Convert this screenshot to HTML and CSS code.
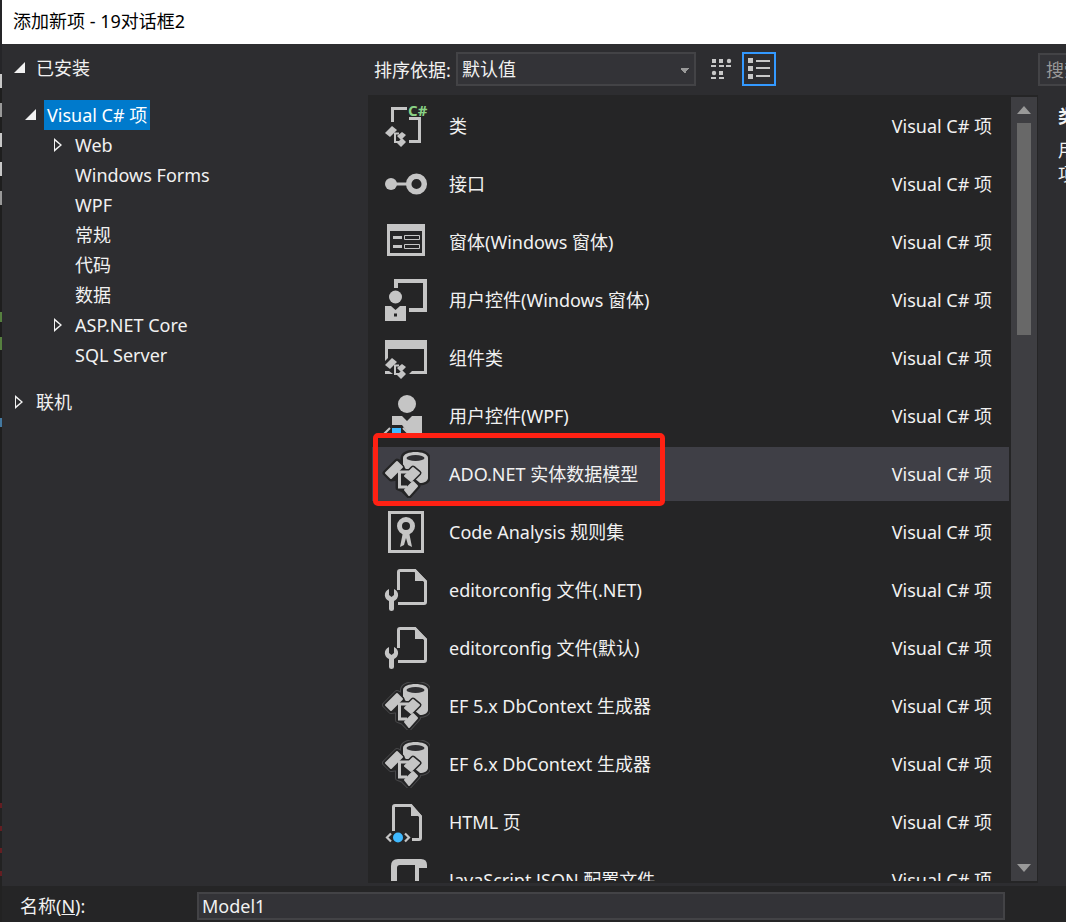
FILE: index.html
```html
<!DOCTYPE html>
<html lang="zh-CN">
<head>
<meta charset="utf-8">
<title>添加新项 - 19对话框2</title>
<link rel="stylesheet" href="styles.css">
</head>
<body>
<svg class="defs" aria-hidden="true">
  <defs>
    <g id="nodes">
      <path d="M3 31l7-7 5 4-7 7z"/>
      <path d="M15 34l5-4 4 3-5 5zM15 41l5-5 4 4-5 5z"/>
      <path d="M12 31.500h5M13 32v8h5" fill="none" stroke="#c5c5c5" stroke-width="2"/>
    </g>
    <path id="model-outline" stroke-linejoin="round" d="M21 8c0-8 25-8 25 0v20c0 3-4 5-8 5h-3l1 3-9 10-6-6-5-2V28l-7 1-6-6 12-12 6 3z"/>
    <g id="model">
      <path d="M21 8c0-8 25-8 25 0v20c0 3-4 5-8 5l-6-5-9-10-2-3z"/>
      <ellipse cx="33.500" cy="8" rx="9" ry="3" fill="#303033"/>
      <g stroke="#252526" stroke-width="5" stroke-linejoin="round">
        <path d="M4 23L15 12l5 5L9 28z"/>
        <path d="M23 26l8-8 6 5-8 8z"/>
        <path d="M23 40l8-8 4 4-8 9z"/>
        <path d="M16 20.500h11v3h-8v12h6v3h-9z" stroke-width="3"/>
      </g>
      <g stroke="#c5c5c5" stroke-width="2" stroke-linejoin="round">
        <path d="M4 23L15 12l5 5L9 28z"/>
        <path d="M23 26l2-2h4l-1-3 3-3 6 5-8 8z"/>
        <path d="M23 40l8-8 4 4-8 9z"/>
      </g>
      <path d="M15 20.500h13v3h-9v12h6v3h-9V22z"/>
    </g>
    <g id="wrench-page">
      <path d="M16.500 24V6q0-1.500 1.500-1.500h15l10.500 11V36q0 1.500-1.500 1.500H16" fill="none" stroke="#c5c5c5" stroke-width="3"/>
      <path d="M33 3v12h12z"/>
      <path d="M7 23v6l2.500 2 2.500-2v-6c6 3 5 10 0 12v8q0 2-2.500 2T7 43v-8c-5-2-6-9 0-12z"/>
    </g>
  </defs>
</svg>
<div class="window">
  <div class="backdrop"></div>
  <div class="dialog">
    <header class="titlebar"><h1>添加新项 - 19对话框2</h1></header>
    <div class="body">
      <nav class="sidebar">
        <div class="branch root"><button class="toggle open" aria-label="折叠"></button><a href="#">已安装</a></div>
        <div class="branch second"><button class="toggle open" aria-label="折叠"></button><a class="current" href="#">Visual C# 项</a></div>
        <ul class="leaves">
          <li><button class="toggle" aria-label="展开"></button><a href="#">Web</a></li>
          <li><a href="#">Windows Forms</a></li>
          <li><a href="#">WPF</a></li>
          <li><a href="#">常规</a></li>
          <li><a href="#">代码</a></li>
          <li><a href="#">数据</a></li>
          <li><button class="toggle" aria-label="展开"></button><a href="#">ASP.NET Core</a></li>
          <li><a href="#">SQL Server</a></li>
        </ul>
        <div class="branch online"><button class="toggle" aria-label="展开"></button><a href="#">联机</a></div>
      </nav>
      <main class="center">
        <div class="toolbar">
          <label for="sort">排序依据:</label>
          <select id="sort"><option>默认值</option></select>
          <button class="view" aria-label="小图标"><svg width="24" height="26" fill="#c8c8c8"><path d="M3 3h4v4H3zM10 3h4v4h-4zM2 9h5v2H2zM10 9h5v2h-5zM17 9h5v2h-5zM10 15h4v4h-4zM2 21h5v2H2zM10 21h5v2h-5z"/><circle cx="20" cy="5" r="2.200"/><circle cx="5" cy="17" r="2.200"/></svg></button>
          <button class="view active" aria-label="中等图标"><svg width="24" height="26" fill="#c8c8c8"><path d="M1 2h5v5H1zM1 10h5v5H1zM1 18h5v5H1zM9 4h14v2H9zM9 11h14v2H9zM9 19h14v2H9z"/></svg></button>
        </div>
        <div class="panel">
          <ul class="items">
            <li><svg class="icon" viewBox="0 0 48 48"><path d="M25 6.500H10.500V20M27 16.500h10.500v23H27" fill="none" stroke="#c5c5c5" stroke-width="3"/><use href="#nodes"/><text x="26" y="14">C#</text></svg><span>类</span><em>Visual C# 项</em></li>
            <li><svg class="icon" viewBox="0 0 48 48"><circle cx="9" cy="24" r="6"/><path d="M9 22.500h18v3H9z"/><circle cx="34.500" cy="24" r="7.800" fill="none" stroke="#c5c5c5" stroke-width="5.500"/></svg><span>接口</span><em>Visual C# 项</em></li>
            <li><svg class="icon" viewBox="0 0 48 48"><path fill-rule="evenodd" d="M5 6h38v32H5zM8 13v22h32V13z"/><path d="M11 18h9v3h-9zM11 27h9v3h-9z"/><path d="M22.500 17.500h15v4h-15zM22.500 26.500h15v4h-15z" fill="none" stroke="#c5c5c5"/></svg><span>窗体(Windows 窗体)</span><em>Visual C# 项</em></li>
            <li><svg class="icon" viewBox="0 0 48 48"><path d="M14 12V5h29v29H27" fill="none" stroke="#c5c5c5" stroke-width="4"/><circle cx="13.500" cy="21" r="6.500"/><path fill-rule="evenodd" d="M3 30h6l4.500 4 4.500-4h6v15H3zM12 37.500v3h3v-3z"/></svg><span>用户控件(Windows 窗体)</span><em>Visual C# 项</em></li>
            <li><svg class="icon" viewBox="0 0 48 48"><path d="M3 6h42v34H27l3-3h12V15H6v9l-3 3z"/><path d="M3 37l4 0 4 3H3z"/><use href="#nodes"/></svg><span>组件类</span><em>Visual C# 项</em></li>
            <li><svg class="icon" viewBox="0 0 48 48"><circle cx="25" cy="12" r="9"/><path d="M10 24h10l5 5 5-5h10v18H27l-7-9H10z"/><path d="M8 36l-5 5 5 4M21 36l5 5-5 4" fill="none" stroke="#c5c5c5" stroke-width="2"/><path fill="#3fb9ff" d="M10 36h9v8h-9z"/></svg><span>用户控件(WPF)</span><em>Visual C# 项</em></li>
            <li class="selected"><svg class="icon" viewBox="0 0 48 48"><use href="#model-outline" fill="#252526" stroke="#252526" stroke-width="5"/><use href="#model"/></svg><span>ADO.NET 实体数据模型</span><em>Visual C# 项</em></li>
            <li><svg class="icon" viewBox="0 0 48 48"><path fill-rule="evenodd" d="M6 3h36v42H6zM9 6v36h30V6z"/><circle cx="24" cy="18" r="6.500" fill="none" stroke="#c5c5c5" stroke-width="5"/><path d="M21 24l-3 15 4-2 2-7 2 7 4 2-3-15z"/></svg><span>Code Analysis 规则集</span><em>Visual C# 项</em></li>
            <li><svg class="icon" viewBox="0 0 48 48"><use href="#wrench-page"/></svg><span>editorconfig 文件(.NET)</span><em>Visual C# 项</em></li>
            <li><svg class="icon" viewBox="0 0 48 48"><use href="#wrench-page"/></svg><span>editorconfig 文件(默认)</span><em>Visual C# 项</em></li>
            <li><svg class="icon" viewBox="0 0 48 48"><use href="#model-outline" fill="#252526" stroke="#48484a" stroke-width="6"/><use href="#model-outline" fill="#252526" stroke="#252526" stroke-width="4"/><use href="#model"/></svg><span>EF 5.x DbContext 生成器</span><em>Visual C# 项</em></li>
            <li><svg class="icon" viewBox="0 0 48 48"><use href="#model-outline" fill="#252526" stroke="#48484a" stroke-width="6"/><use href="#model-outline" fill="#252526" stroke="#252526" stroke-width="4"/><use href="#model"/></svg><span>EF 6.x DbContext 生成器</span><em>Visual C# 项</em></li>
            <li><svg class="icon" viewBox="0 0 48 48"><path d="M11.500 33V9q0-1.500 1.500-1.500h16l9.500 11V40q0 1.500-1.500 1.500h-7" fill="none" stroke="#c5c5c5" stroke-width="3"/><path d="M29 6v12h11z"/><path d="M9 35.500l-4 4 4 4M23 35.500l4 4-4 4" fill="none" stroke="#c5c5c5" stroke-width="2.200"/><circle cx="16" cy="39.500" r="5" fill="#3fb9ff"/></svg><span>HTML 页</span><em>Visual C# 项</em></li>
            <li><svg class="icon" viewBox="0 0 48 48"><path d="M9 40V10q0-7 7-7h23q6 0 6 6v3h-8v28h-4V9H18q-3 0-3 3v28z"/></svg><span>JavaScript JSON 配置文件</span><em>Visual C# 项</em></li>
          </ul>
          <div class="scrollbar">
            <button class="arrow up" aria-label="向上滚动"></button>
            <div class="track"><div class="thumb"></div></div>
            <button class="arrow down" aria-label="向下滚动"></button>
          </div>
        </div>
      </main>
      <aside class="details">
        <input class="search" type="search" aria-label="搜索" placeholder="搜索">
        <h2>类型:</h2>
        <p>用于</p>
        <p>项</p>
      </aside>
    </div>
    <footer class="footer">
      <label for="name">名称(<u>N</u>):</label>
      <input id="name" type="text" value="Model1">
    </footer>
  </div>
</div>
</body>
</html>
```
FILE: styles.css
```css
*, *::after { box-sizing: border-box; }

body {
  margin: 0;
  overflow: hidden;
  background: #2d2d30;
  color: #f1f1f1;
  font: 18px/30px "Noto Sans", "Noto Sans CJK SC", sans-serif;
}

button, input, select { font: inherit; color: inherit; margin: 0; padding: 0; border: 0; background: none; }
ul { margin: 0; padding: 0; list-style: none; }
h1, h2, p { margin: 0; font-size: 18px; }
a { color: inherit; text-decoration: none; }
.defs { position: absolute; width: 0; height: 0; }

.window { display: flex; height: 100vh; }

.backdrop {
  flex: 0 0 2px;
  background: linear-gradient(#252528 74px, #c8c8c8 74px 88px, #1e1e1e 88px 103px, #999 103px 117px, #1e1e1e 117px 133px, #c8c8c8 133px 147px, #1e1e1e 147px 162px, #c8c8c8 162px 176px, #1e1e1e 176px 191px, #999 191px 205px, #1e1e1e 205px 312px, #56803f 312px 322px, #1e1e1e 322px 337px, #56803f 337px 350px, #1e1e1e 350px 418px, #4378a0 418px 427px, #1e1e1e 427px 803px, #641e22 803px 808px, #222 808px 826px, #641e22 826px 831px, #222 831px 848px, #641e22 848px 853px, #222 853px 871px, #641e22 871px 876px, #222 876px);
}

.dialog { flex: 1; min-width: 0; display: flex; flex-direction: column; }
.titlebar { height: 44px; padding: 6px 11px; background: #fff; color: #000; }
.titlebar h1 { font-weight: 400; }

.body { flex: 1; min-height: 0; display: flex; }

.sidebar { flex: 0 0 366px; padding-top: 9px; }
.branch, .leaves li { display: flex; align-items: center; height: 30px; }
.root { padding-left: 12px; margin-bottom: 17px; }
.root a { margin-left: 9px; }
.online { padding-left: 10px; margin-top: 17px; }
.online a { margin-left: 11px; }
.second { padding-left: 23px; }
.second a { margin-left: 6px; }
.current { padding: 0 3px; background: #007acc; color: #fff; }
.leaves li { padding-left: 73px; }
.leaves .toggle { margin-left: -24px; margin-right: 11px; }

.toggle { width: 13px; height: 16px; background: #f1f1f1; clip-path: polygon(3px 1px, 11px 8px, 3px 15px, 3px 4px, 4px 4px, 4px 12px, 9px 8px, 4px 4px, 3px 4px); }
.toggle.open { clip-path: polygon(0 13px, 11px 2px, 11px 13px); }

.center { flex: 1; min-width: 0; display: flex; flex-direction: column; }
.toolbar { display: flex; align-items: center; height: 51px; padding: 0 6px 2px; }
.toolbar label { width: 82px; padding-top: 2px; white-space: nowrap; }
.toolbar select {
  width: 240px;
  height: 34px;
  padding-left: 4px;
  appearance: none;
  border: 2px solid #434346;
  background-color: #333337;
  background-image: linear-gradient(-135deg, #999 50%, transparent 50%), linear-gradient(135deg, #999 50%, transparent 50%);
  background-repeat: no-repeat;
  background-size: 5px 5px;
  background-position: right 9px top 14px, right 4px top 14px;
  background-image: linear-gradient(to bottom left, #999 50%, transparent 50%), linear-gradient(to bottom right, #999 50%, transparent 50%);
  background-image: linear-gradient(45deg, transparent 50%, #999 50%), linear-gradient(-45deg, transparent 50%, #999 50%);
}
.view { display: grid; place-items: center; width: 34px; height: 34px; margin-left: 8px; }
.view.active { margin-left: 4px; border: 2px solid #3399ff; }

.panel { flex: 1; min-height: 0; display: flex; gap: 2px; margin-bottom: 3px; padding: 2px 1px 2px 4px; background: #252526; }
.items { flex: 1; min-width: 0; overflow: hidden; display: flex; flex-direction: column; gap: 4px; padding-top: 2px; }
.items li { position: relative; flex: 0 0 54px; display: flex; align-items: center; padding: 0 17px 0 10px; }
.items span { flex: 1; margin-left: 19px; white-space: nowrap; }
.items em { font-style: normal; white-space: nowrap; }
.icon { width: 48px; height: 48px; fill: #c5c5c5; }
.icon text { fill: #89d185; font: bold 15px "Noto Sans", sans-serif; }
.items .selected { background: #3f3f46; z-index: 1; }
.selected::after { content: ""; position: absolute; left: 1px; top: -14px; width: 292px; height: 73px; border: 5px solid #ff2113; border-radius: 5px; }

.scrollbar { flex: 0 0 26px; display: flex; flex-direction: column; background: #3e3e42; }
.arrow { display: block; height: 26px; background: #999; }
.up { clip-path: polygon(6px 17px, 13px 9px, 20px 17px); }
.down { clip-path: polygon(6px 9px, 20px 9px, 13px 17px); }
.track { flex: 1; padding: 0 6px; }
.thumb { height: 29%; background: #686868; }

.details { flex: 0 0 28px; overflow: hidden; padding-top: 9px; white-space: nowrap; }
.search { display: block; width: 240px; height: 33px; padding-left: 6px; border: 2px solid #434346; background: #333337; }
.search::placeholder { color: #999; opacity: 1; }
.details h2 { margin: 15px 0 7px 20px; line-height: 30px; }
.details p { margin-left: 20px; line-height: 24px; }

.footer { display: flex; align-items: center; height: 36px; padding: 4px 61px 0 18px; background: #252526; }
.footer label { width: 177px; }
.footer input { flex: 1; min-width: 0; height: 28px; padding-left: 3px; border: 2px solid #434346; background: #333337; }
```
